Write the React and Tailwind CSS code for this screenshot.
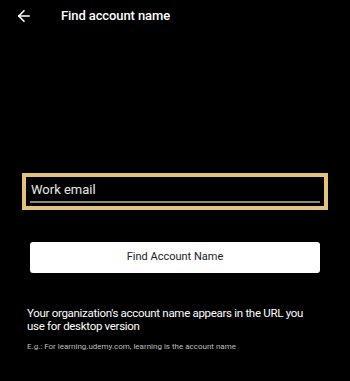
import React from "react";
import { ArrowLeft } from "lucide-react";

export default function App() {
  return (
    <div
      className="w-[350px] h-[381px] bg-black text-white flex flex-col"
      style={{ fontFamily: "Roboto, 'Liberation Sans', sans-serif" }}
    >
      {/* Top bar */}
      <div className="flex items-center h-[31px] pl-[15px]">
        <ArrowLeft className="h-[18px] w-[18px] text-white" strokeWidth={2.2} />
        <span className="ml-[28px] text-[13px] font-medium tracking-[-0.1px]">
          Find account name
        </span>
      </div>

      {/* Email field */}
      <div className="mt-[142px] mx-[22px] h-[37px] border-[4px] border-[#e2c27c] px-[4px] flex flex-col justify-end pb-[3px]">
        <div className="text-[13px] text-[#e8e8e8] leading-none pb-[5px] px-[1px]">
          Work email
        </div>
        <div className="h-[2px] bg-[#8c8580]" />
      </div>

      {/* Button */}
      <button className="mt-[32px] mx-[30px] h-[31px] bg-white rounded-[3px] text-[11px] text-[#222] flex items-center justify-center">
        Find Account Name
      </button>

      {/* Help text */}
      <div className="mt-[34px] pl-[27px] w-[315px]">
        <p className="text-[11.5px] leading-[13px] tracking-[-0.3px] text-white">
          Your organization's account name appears in the URL you use for
          desktop version
        </p>
        <p className="mt-[9px] text-[8px] leading-[10px] text-[#bdbdbd]">
          E.g.: For learning.udemy.com, learning is the account name
        </p>
      </div>
    </div>
  );
}
